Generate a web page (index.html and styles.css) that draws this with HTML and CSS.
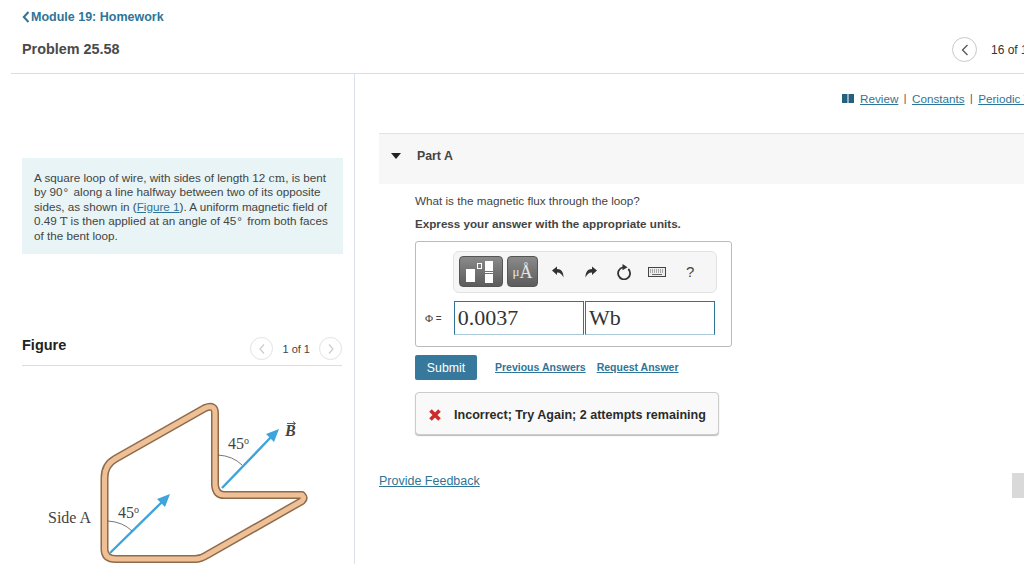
FILE: index.html
```html
<!DOCTYPE html>
<html lang="en">
<head>
<meta charset="utf-8">
<title>Problem 25.58</title>
<link rel="stylesheet" href="styles.css">
</head>
<body>
<header class="top">
  <a class="crumb" href="#"><svg class="crumb-icon" viewBox="0 0 8 12"><path d="M6.500 1 1.800 6l4.700 5" fill="none" stroke="#2f7597" stroke-width="2"/></svg>Module 19: Homework</a>
  <div class="title-row">
    <h1>Problem 25.58</h1>
    <div class="pager">
      <span class="round round-main"><svg viewBox="0 0 10 14"><path d="M7.500 2 2.500 7l5 5" fill="none" stroke="#555" stroke-width="1.300"/></svg></span>
      <span class="pager-text">16 of 19</span>
    </div>
  </div>
</header>
<main class="columns">
  <section class="left">
    <div class="intro">A square loop of wire, with sides of length 12 <span class="math">cm</span>, is bent by 90<span class="degree">°</span> along a line halfway between two of its opposite sides, as shown in (<a href="#">Figure 1</a>). A uniform magnetic field of 0.49 <span class="math">T</span> is then applied at an angle of 45<span class="degree">°</span> from both faces of the bent loop.</div>
    <div class="figure-head">
      <h2>Figure</h2>
      <div class="fig-pager">
        <span class="round round-small"><svg viewBox="0 0 10 14"><path d="M7 2.500 3 7l4 4.500" fill="none" stroke="#ccc" stroke-width="1.200"/></svg></span>
        <span>1 of 1</span>
        <span class="round round-small"><svg viewBox="0 0 10 14"><path d="M3 2.500 7 7l-4 4.500" fill="none" stroke="#ccc" stroke-width="1.200"/></svg></span>
      </div>
    </div>
    <svg class="figure" viewBox="0 366 332 198" width="332" height="198">
      <path d="M205 408 115 459Q104.500 465 104.500 478V549Q104.500 559 116 559H195Q201 559 207 555L302 501Q305 498 302 495H224Q216 495 215 485V413Q215 404 205 408Z" fill="none" stroke="#8d6b4c" stroke-width="8" stroke-linejoin="round"/>
      <path d="M205 408 115 459Q104.500 465 104.500 478V549Q104.500 559 116 559H195Q201 559 207 555L302 501Q305 498 302 495H224Q216 495 215 485V413Q215 404 205 408Z" fill="none" stroke="#efc096" stroke-width="5" stroke-linejoin="round"/>
      <path d="M110 553 163 501M222 488 273 435" stroke="#3da4dc" stroke-width="2.400" fill="none"/>
      <path d="M170 494 157 499 165 507ZM279 429 266 434 274 442Z" fill="#3da4dc"/>
      <path d="M108 521Q123 522 132 531M218 455Q233 456 242 465" stroke="#555" stroke-width=".8" fill="none"/>
      <text class="fig-label" x="118" y="518">45<tspan class="deg" dy="-5">o</tspan></text>
      <text class="fig-label" x="228" y="449">45<tspan class="deg" dy="-5">o</tspan></text>
      <text class="fig-label" x="48" y="523">Side A</text>
      <text class="fig-label fig-b" x="285" y="436">B</text>
      <path d="M287 423.500H295M293 421.500 295.500 423.500 293 425.500" stroke="#333" stroke-width=".8" fill="none"/>
    </svg>
  </section>
  <section class="right">
    <nav class="links">
      <svg class="book" viewBox="0 0 12 9"><path d="M0 0H5.500V9H0ZM6.500 0H12V9H6.500Z" fill="#25607f"/></svg>
      <a href="#">Review</a><span class="sep">|</span><a href="#">Constants</a><span class="sep">|</span><a href="#">Periodic Table</a>
    </nav>
    <div class="part-head">
      <span class="caret"></span>
      <strong>Part A</strong>
    </div>
    <div class="part-body">
      <p class="question">What is the magnetic flux through the loop?</p>
      <p class="instruction">Express your answer with the appropriate units.</p>
      <div class="answer">
        <div class="toolbar">
          <span class="tool tool-wide">
            <svg viewBox="0 0 36 22" width="36" height="22">
              <rect x="3" y="8" width="9" height="13" fill="#fff"/>
              <rect x="14.500" y="2.500" width="4" height="5" fill="none" stroke="#fff"/>
              <rect x="22" y="0" width="8" height="10" fill="#fff"/>
              <rect x="22" y="11" width="8" height="1" fill="#fff"/>
              <rect x="22" y="13" width="8" height="9" fill="#fff"/>
            </svg>
          </span>
          <span class="tool tool-unit"><span class="mu">μ</span>Å</span>
          <span class="icon-set">
            <svg class="ic-undo" viewBox="0 0 14 14" width="14" height="14"><path d="M1 5.500 6 1.500V4C10.500 4 12.500 7 12.500 12.500 11 9.500 9.500 7.500 6 7.500V10Z" fill="#333"/></svg>
            <svg class="ic-redo" viewBox="0 0 14 14" width="14" height="14"><path d="M13 5.500 8 1.500V4C3.500 4 1.500 7 1.500 12.500 3 9.500 4.500 7.500 8 7.500V10Z" fill="#333"/></svg>
            <svg class="ic-reset" viewBox="0 0 16 16" width="16" height="16"><path d="M7 3.400A6 6 0 1 0 12.300 5" fill="none" stroke="#333" stroke-width="1.800"/><path d="M6.500 0 11.500 3.300 6.500 6.300Z" fill="#333"/></svg>
            <svg class="ic-keys" viewBox="0 0 18 10" width="18" height="10"><rect x=".5" y=".5" width="17" height="9" fill="#eee" stroke="#444"/><path d="M2 3H16M2 5H16" stroke="#666" stroke-dasharray="1 1"/><path d="M4 7.500H14" stroke="#666"/></svg>
            <span class="help">?</span>
          </span>
        </div>
        <div class="entry">
          <span class="symbol"><span class="phi">Φ</span> =</span>
          <span class="field">0.0037</span>
          <span class="field">Wb</span>
        </div>
      </div>
      <div class="actions">
        <button class="submit" type="button">Submit</button>
        <a href="#">Previous Answers</a>
        <a href="#">Request Answer</a>
      </div>
      <div class="feedback">
        <svg viewBox="0 0 14 14" width="14" height="14"><path d="M2.500 2.500 11.500 11.500M11.500 2.500 2.500 11.500" stroke="#cf2a2a" stroke-width="3.600"/></svg>
        <span>Incorrect; Try Again; 2 attempts remaining</span>
      </div>
    </div>
    <a class="provide" href="#">Provide Feedback</a>
  </section>
</main>
<div class="scroll-thumb"></div>
</body>
</html>
```
FILE: styles.css
```css
* { box-sizing: border-box; }
html, body { margin: 0; height: 564px; overflow: hidden; }
body { font-family: "Liberation Sans", Arial, sans-serif; color: #333; background: #fff; position: relative; width: 1024px; }
a { color: #2f7597; }

.top { height: 74px; margin-left: 11px; padding: 10px 0 0 11px; border-bottom: 1px solid #ddd; }
.crumb { display: flex; align-items: center; gap: 1px; font-size: 12.500px; line-height: 14px; font-weight: 700; color: #2f7597; text-decoration: none; }
.crumb-icon { width: 8px; height: 12px; }
.title-row { display: flex; justify-content: space-between; align-items: center; margin-top: 11px; }
h1 { margin: 0; font-size: 14.400px; line-height: 24px; font-weight: 700; color: #4a4a4a; }
.pager { display: flex; align-items: center; gap: 14px; width: 72px; overflow: hidden; white-space: nowrap; font-size: 12px; flex: none; margin-top: 2px; }
.round { display: inline-flex; align-items: center; justify-content: center; border-radius: 50%; background: #fff; flex: none; }
.round-main { width: 25px; height: 25px; border: 1px solid #c8c8c8; }
.round-main svg { width: 10px; height: 14px; }
.round-small { width: 23px; height: 23px; border: 1px solid #e2e2e2; }
.round-small svg { width: 10px; height: 14px; }

.columns { display: grid; grid-template-columns: 355px 1fr; height: 490px; }
.left { border-right: 1px solid #d8e2ec; padding: 84px 11px 0 22px; overflow: hidden; }
.intro { height: 96px; padding: 13px 12px 0; background: #e8f4f6; font-size: 11.700px; line-height: 14.400px; color: #444; }
.degree { padding: 0 2px 0 1px; }
.math { font-family: "DejaVu Serif", "Liberation Serif", serif; font-size: 11px; line-height: 0; }
.figure-head { display: flex; justify-content: space-between; align-items: center; height: 34px; margin-top: 78px; width: 320px; border-bottom: 1px solid #ddd; }
h2 { margin: 0 0 8px; font-size: 14.500px; font-weight: 700; color: #222; }
.fig-pager { display: flex; align-items: center; gap: 9px; font-size: 11px; color: #444; }
.figure { display: block; margin-left: -22px; }
.fig-label { font-family: "Liberation Serif", serif; font-size: 16px; fill: #444; }
.deg { font-size: 10px; }
.fig-b { font-style: italic; font-weight: 700; }

.right { padding: 0 0 0 24px; overflow: hidden; min-width: 0; }
.links { display: flex; align-items: center; height: 59px; padding: 0 0 10px 463px; white-space: nowrap; font-size: 11.700px; }
.book { width: 12px; height: 9px; margin-right: 6px; flex: none; }
.sep { margin: 0 5.500px; color: #444; font-size: 10px; }
.part-head { display: flex; align-items: center; height: 51px; padding: 0 0 7px 12px; background: #f7f7f7; border-top: 1px solid #e3e3e3; }
.part-head strong { margin-left: 16px; font-size: 12.300px; color: #444; }
.caret { width: 0; height: 0; border-left: 5.500px solid transparent; border-right: 5.500px solid transparent; border-top: 6px solid #222; }
.part-body { padding-left: 36px; }
.question { margin: 10px 0 0; font-size: 11.700px; line-height: 14px; color: #444; }
.instruction { margin: 9px 0 0; font-size: 11.650px; line-height: 14px; font-weight: 700; color: #444; }
.answer { width: 317px; height: 106px; margin-top: 10px; padding: 9px 15px 0 37px; border: 1px solid #bbb; border-radius: 3px; }
.toolbar { display: flex; align-items: center; gap: 4px; width: 264px; height: 42px; padding: 0 5px 1px; background: #f6f6f6; border: 1px solid #e2e2e2; border-radius: 6px; }
.tool { display: flex; align-items: center; justify-content: center; height: 31px; border-radius: 4px; background: linear-gradient(#8a8a8a, #5c5c5c); border: 1px solid #555; color: #e4e4e4; }
.tool-wide { width: 44px; }
.tool-unit { width: 31px; font-family: "Liberation Serif", serif; font-size: 18px; line-height: 1; }
.mu { font-size: 13px; }
.icon-set { display: flex; align-items: center; flex: 1; padding-left: 9px; }
.ic-redo { margin-left: 19px; }
.ic-reset { margin-left: 18px; }
.ic-keys { margin-left: 16px; }
.help { margin-left: 20px; font-size: 15px; color: #444; }
.entry { display: flex; align-items: center; margin: 8px 0 0 -28px; }
.symbol { width: 29px; font-size: 10px; color: #444; white-space: nowrap; }
.phi { font-family: "Liberation Serif", serif; font-size: 11px; }
.field { display: block; width: 131px; height: 34px; margin-right: 1px; padding-left: 3px; border: 1px solid #2f7597; border-bottom-color: #a9c8d8; font-family: "Liberation Serif", serif; font-size: 22px; line-height: 32px; color: #333; }
.actions { display: flex; align-items: center; gap: 11px; margin-top: 8px; font-size: 10.500px; font-weight: 700; line-height: 23px; }
.submit { width: 62px; height: 25px; margin-right: 7px; padding: 0; border: 0; border-radius: 2px; background: #37799c; color: #fff; font: 12.300px "Liberation Sans", Arial, sans-serif; }
.feedback { display: flex; align-items: center; gap: 12px; width: 304px; height: 43px; margin-top: 12px; padding: 2px 0 0 12px; background: #f9f9f9; border: 1px solid #ccc; border-radius: 4px; box-shadow: 0 1px 1px #bbb; font-size: 12.550px; font-weight: 700; color: #2b2b2b; white-space: nowrap; }
.provide { display: block; margin-top: 39px; font-size: 12.500px; }
.scroll-thumb { position: absolute; left: 1012px; top: 473px; width: 12px; height: 25px; background: #d9d9d9; }
```
